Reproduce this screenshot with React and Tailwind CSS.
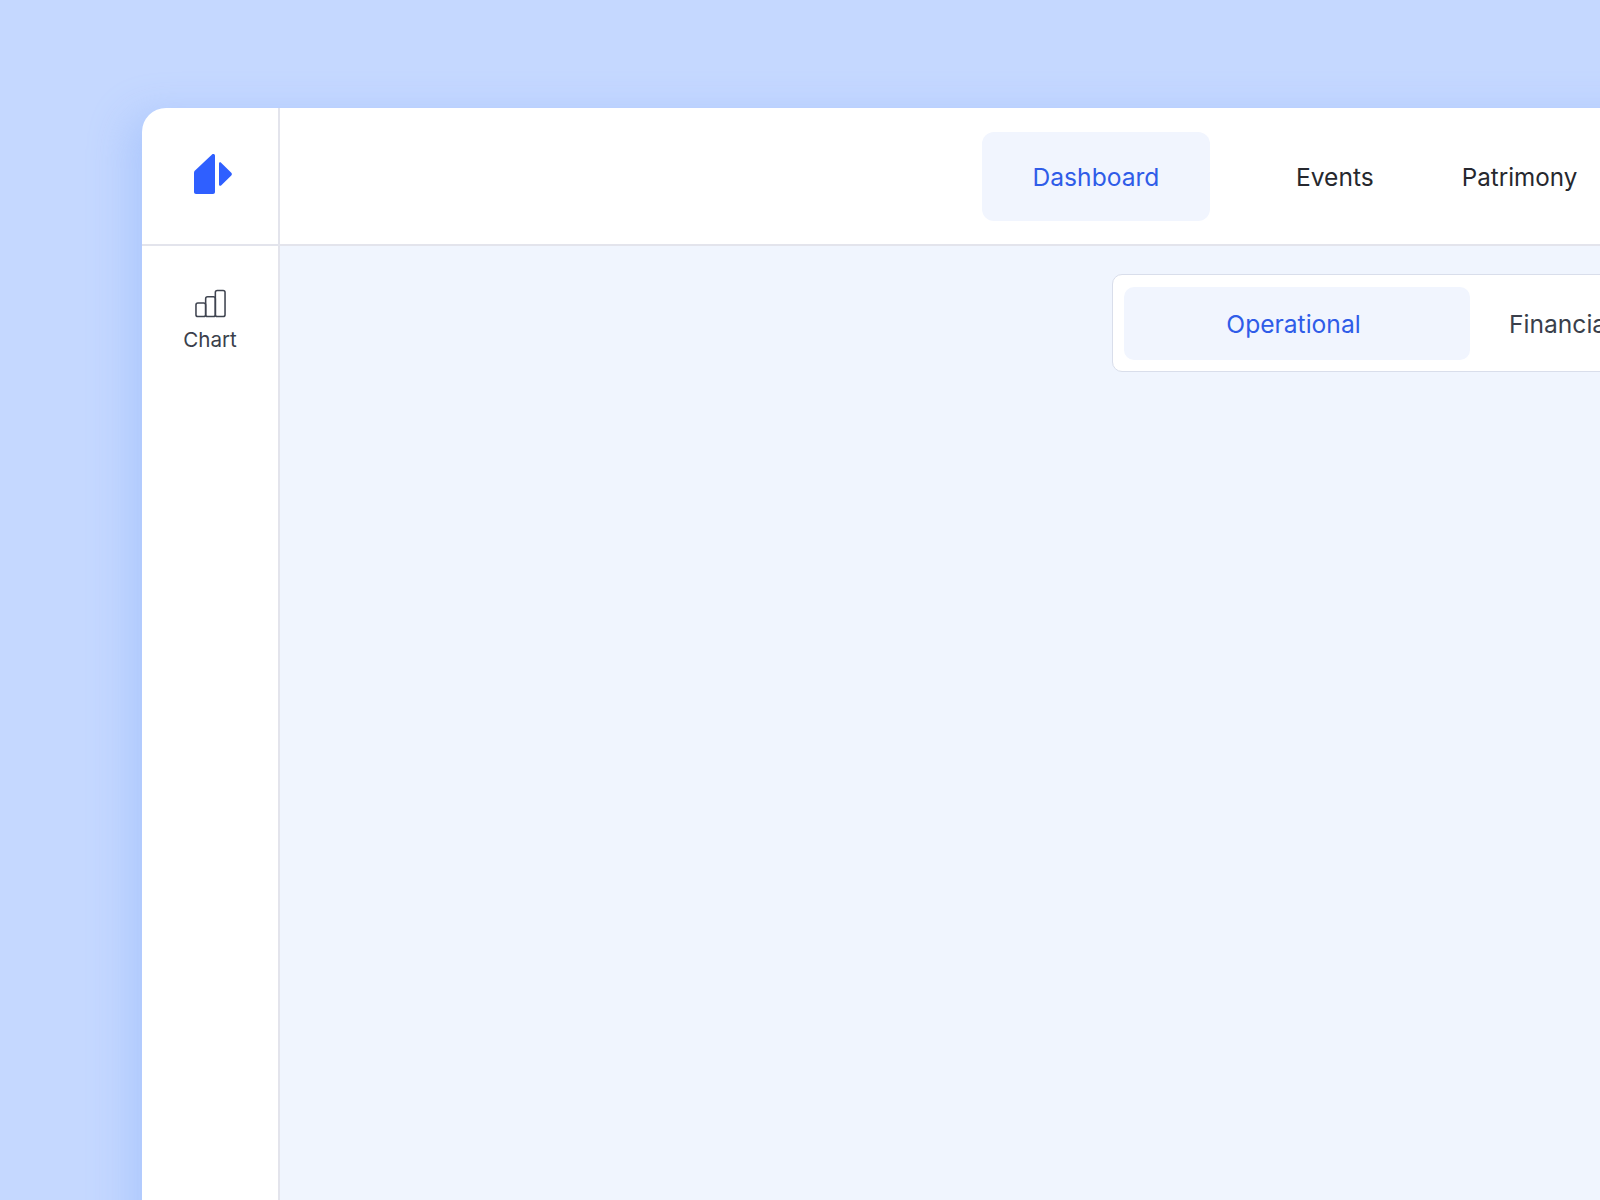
import React from "react";

const Logo = () => (
  <svg width="38" height="40" viewBox="0 0 38 40" fill="#2f5fff">
    <path d="M1 16.6 18 .6c1.200-1 3-.4 3 1.400v36c0 1.100-.9 2-2 2H2c-1.100 0-2-.9-2-2V19c0-1 .3-1.700 1-2.400Z" />
    <path d="M25 9.600c0-1.200 1.300-1.700 2.100-.9l10.200 10c.8.800.8 1.900 0 2.700l-10.200 10c-.8.800-2.100.3-2.100-.9V9.600Z" />
  </svg>
);

const ChartIcon = () => (
  <svg width="31" height="29" viewBox="0 0 32 29" fill="none" stroke="#3f4450" strokeWidth="1.600">
    <rect x="1" y="14" width="10" height="14" rx="2" />
    <rect x="11" y="7.500" width="10" height="20.500" rx="2" />
    <rect x="21" y="1" width="10" height="27" rx="2" />
  </svg>
);

export default function App() {
  return (
    <div
      className="w-[1600px] h-[1200px] overflow-hidden pt-[108px] pl-[142px] bg-[#c5d8ff]"
      style={{ fontFamily: "Inter, sans-serif" }}
    >
      <div className="flex w-[1600px] h-[1200px] bg-white rounded-tl-[24px] shadow-[-14px_6px_40px_rgba(120,165,250,0.32)]">
        <aside className="w-[138px] shrink-0 border-r-2 border-[#e3e4ec]">
          <div className="h-[138px] border-b-2 border-[#e3e4ec] pt-[46px] pl-[52px]">
            <Logo />
          </div>
          <div className="flex flex-col items-center pt-[43px]">
            <div className="pl-[1px]">
              <ChartIcon />
            </div>
            <span className="mt-[8px] text-[20.6px] leading-[28px] text-[#3a3f4b]">Chart</span>
          </div>
        </aside>
        <main className="flex-1 min-w-0">
          <header className="h-[138px] border-b-2 border-[#e3e4ec] pt-[24px] pl-[702px] flex items-start">
            <button className="w-[228px] h-[89px] pt-[2px] rounded-[12px] bg-[#f1f5fe] text-[24.6px] text-[#2f5ce8]">
              Dashboard
            </button>
            <span className="ml-[86px] h-[89px] pt-[2px] flex items-center text-[24.6px] text-[#26282e]">Events</span>
            <span className="ml-[88px] h-[89px] pt-[4px] flex items-center text-[24.2px] text-[#26282e]">Patrimony</span>
          </header>
          <div className="h-full bg-[#f0f5fe] pt-[28px] pl-[832px]">
            <div className="w-[700px] h-[98px] flex items-center bg-white border border-[#d9deeb] rounded-[10px] pl-[11px]">
              <button className="w-[346px] h-[73px] pr-[7px] pt-[2px] rounded-[10px] bg-[#f1f5fe] text-[24.6px] text-[#2f5ce8]">
                Operational
              </button>
              <span className="ml-[39px] pt-[2px] text-[24.6px] text-[#3a3f4b]">Financial</span>
            </div>
          </div>
        </main>
      </div>
    </div>
  );
}
